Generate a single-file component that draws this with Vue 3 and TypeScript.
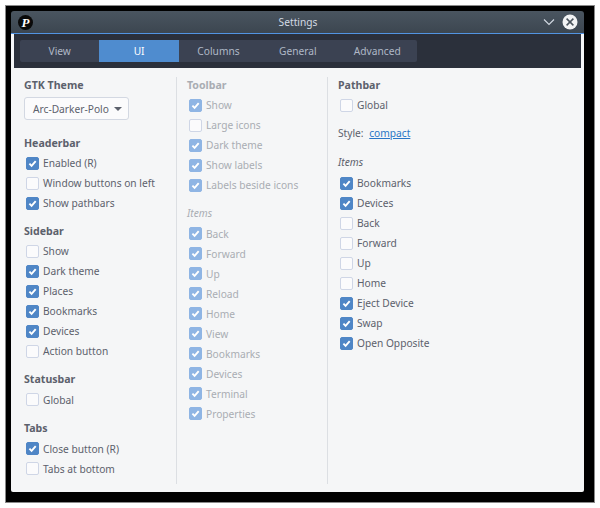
<template>
  <div class="screen">
    <div class="window">
      <div class="titlebar">
        <div class="logo"><span>P</span></div>
        <div class="title">Settings</div>
        <svg class="chevron" width="14" height="14" viewBox="0 0 14 14">
          <path d="M2 4.5 L7 9.5 L12 4.5" fill="none" stroke="#d3dae3" stroke-width="1.1" />
        </svg>
        <svg class="close" width="16" height="16" viewBox="0 0 16 16">
          <circle cx="8" cy="8" r="7.5" fill="#f2f3f4" />
          <path d="M4.6 4.6 L11.4 11.4 M11.4 4.6 L4.6 11.4" stroke="#4a535c" stroke-width="1.5" />
        </svg>
      </div>
      <div class="content">
        <div class="tabbar">
          <div class="tabs">
            <div v-for="tab in tabs" :key="tab" :class="['tab', { active: tab === 'UI' }]">{{ tab }}</div>
          </div>
        </div>
        <div class="columns">
          <div v-for="(col, c) in columns" :key="c" :class="['col', 'col' + (c + 1)]">
            <div v-for="sec in col" :key="sec.title" :class="['section', { dim: sec.dim }]">
              <div :class="sec.italic ? 'items-title' : 'heading'">{{ sec.title }}</div>
              <div v-if="sec.combo" class="combo">
                <span>{{ sec.combo }}</span><i class="arrow"></i>
              </div>
              <div v-for="row in sec.rows" :key="row[0]" class="check-row">
                <span :class="['box', { on: row[1] }]">
                  <svg v-if="row[1]" width="11" height="11" viewBox="0 0 11 11">
                    <path d="M2.4 5.6 L4.6 7.8 L8.7 3.2" fill="none" stroke="#fff" stroke-width="1.9" />
                  </svg>
                </span>
                <span>{{ row[0] }}</span>
              </div>
              <div v-if="sec.style" class="style-row">
                Style: <a class="link">{{ sec.style }}</a>
              </div>
            </div>
          </div>
        </div>
      </div>
    </div>
  </div>
</template>

<script setup lang="ts">
type Row = [string, boolean]
interface Section {
  title: string
  rows: Row[]
  dim?: boolean
  italic?: boolean
  combo?: string
  style?: string
}

const tabs = ['View', 'UI', 'Columns', 'General', 'Advanced']

const columns: Section[][] = [
  [
    { title: 'GTK Theme', combo: 'Arc-Darker-Polo', rows: [] },
    {
      title: 'Headerbar',
      rows: [['Enabled (R)', true], ['Window buttons on left', false], ['Show pathbars', true]],
    },
    {
      title: 'Sidebar',
      rows: [
        ['Show', false],
        ['Dark theme', true],
        ['Places', true],
        ['Bookmarks', true],
        ['Devices', true],
        ['Action button', false],
      ],
    },
    { title: 'Statusbar', rows: [['Global', false]] },
    { title: 'Tabs', rows: [['Close button (R)', true], ['Tabs at bottom', false]] },
  ],
  [
    {
      title: 'Toolbar',
      dim: true,
      rows: [
        ['Show', true],
        ['Large icons', false],
        ['Dark theme', true],
        ['Show labels', true],
        ['Labels beside icons', true],
      ],
    },
    {
      title: 'Items',
      dim: true,
      italic: true,
      rows: [
        ['Back', true],
        ['Forward', true],
        ['Up', true],
        ['Reload', true],
        ['Home', true],
        ['View', true],
        ['Bookmarks', true],
        ['Devices', true],
        ['Terminal', true],
        ['Properties', true],
      ],
    },
  ],
  [
    { title: 'Pathbar', style: 'compact', rows: [['Global', false]] },
    {
      title: 'Items',
      italic: true,
      rows: [
        ['Bookmarks', true],
        ['Devices', true],
        ['Back', false],
        ['Forward', false],
        ['Up', false],
        ['Home', false],
        ['Eject Device', true],
        ['Swap', true],
        ['Open Opposite', true],
      ],
    },
  ],
]
</script>

<style>
html, body { margin: 0; background: #fff; }
</style>

<style scoped>
.screen {
  width: 600px;
  height: 508px;
  box-sizing: border-box;
  padding: 5px 15px 5px 5px;
  font-family: "Noto Sans", "Open Sans", sans-serif;
  font-size: 10.2px;
  color: #5c616c;
}
.window {
  width: 590px;
  height: 498px;
  box-sizing: border-box;
  background: #000;
  border: 1px solid #8a8a8a;
  padding: 5px 10px 10px 5px;
}
.titlebar {
  height: 22px;
  display: flex;
  align-items: center;
  padding: 0 6px 0 7px;
  background: linear-gradient(#4a5560, #3c4650);
  border-radius: 3px 3px 0 0;
  border-bottom: 1px solid #5294e2;
  color: #d3dae3;
}
.logo {
  width: 15px;
  height: 15px;
  border-radius: 50%;
  background: #0a0a0a;
  color: #fff;
  display: flex;
  align-items: center;
  justify-content: center;
}
.logo span {
  font-family: "Liberation Serif", serif;
  font-weight: bold;
  font-style: italic;
  font-size: 13px;
  line-height: 15px;
}
.title {
  flex: 1;
  text-align: center;
  padding-left: 21px;
}
.chevron { margin-right: 6px; }
.content {
  height: 458px;
  background: #f5f6f7;
  padding: 0 3px;
  border-radius: 0 0 2px 2px;
}
.tabbar {
  height: 34px;
  background: #2b303b;
  padding: 6px 0 0 6px;
  box-sizing: border-box;
}
.tabs {
  display: inline-flex;
  height: 22px;
  background: #3b4252;
  border-radius: 2px;
  overflow: hidden;
}
.tab {
  width: 79.4px;
  line-height: 22px;
  text-align: center;
  color: #afb8c6;
}
.tab.active {
  color: #fff;
  background: #4f8ccf;
}
.columns {
  display: flex;
  padding-top: 8.5px;
}
.col {
  box-sizing: border-box;
  height: 407.5px;
}
.col1 { width: 162px; padding-left: 10px; }
.col2 { width: 151px; border-left: 1px solid #dcdfe3; padding-left: 10px; }
.col3 { flex: 1; border-left: 1px solid #dcdfe3; padding-left: 10px; }
.section { padding-bottom: 9.6px; }
.col1 .section:last-child { padding-top: 1px; }
.heading, .items-title {
  height: 16px;
  line-height: 16px;
  margin-bottom: 2.5px;
}
.heading {
  font-weight: bold;
  font-size: 10.6px;
}
.items-title {
  font-style: italic;
  margin-bottom: 3px;
}
.dim { color: #a9adb3; }
.combo {
  margin-top: 4.5px;
  margin-bottom: 5.3px;
  width: 105px;
  height: 23px;
  box-sizing: border-box;
  border: 1px solid #d3d8e2;
  border-radius: 3px;
  background: #fbfbfc;
  display: flex;
  align-items: center;
  padding-left: 8px;
  gap: 5px;
}
.arrow {
  width: 0;
  height: 0;
  border-left: 4px solid transparent;
  border-right: 4px solid transparent;
  border-top: 4px solid #5c616c;
}
.check-row {
  display: flex;
  align-items: center;
  height: 20px;
  gap: 4.5px;
  padding-left: 1.5px;
}
.box {
  width: 11px;
  height: 11px;
  border: 0.5px solid #cfd6e6;
  border-radius: 2px;
  background: #fbfbfc;
  display: block;
  flex: none;
}
.box.on {
  background: #4f86c6;
  border-color: #4f86c6;
}
.dim .box.on {
  background: #8fb5e4;
  border-color: #8fb5e4;
}
.style-row {
  height: 20px;
  line-height: 20px;
  margin-top: 8px;
  margin-bottom: 1.5px;
}
.link {
  color: #2a76c6;
  text-decoration: underline;
  margin-left: 3px;
}
</style>
